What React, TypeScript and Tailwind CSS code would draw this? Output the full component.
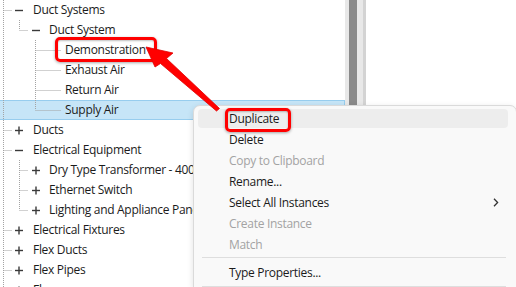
import React from "react";

type Row = {
  label: string;
  level: 0 | 1 | 2;
  expander?: "plus" | "minus";
  // vertical guides for this row: x position and whether it stops at the middle (last child)
  guides: { x: number; half?: boolean }[];
  selected?: boolean;
};

const rows: Row[] = [
  { label: "Duct Systems", level: 0, expander: "minus", guides: [{ x: 3.5 }] },
  { label: "Duct System", level: 1, expander: "minus", guides: [{ x: 3.5 }, { x: 19.5, half: true }] },
  { label: "Demonstration", level: 2, guides: [{ x: 3.5 }, { x: 35.5 }] },
  { label: "Exhaust Air", level: 2, guides: [{ x: 3.5 }, { x: 35.5 }] },
  { label: "Return Air", level: 2, guides: [{ x: 3.5 }, { x: 35.5 }] },
  { label: "Supply Air", level: 2, guides: [{ x: 3.5 }, { x: 35.5, half: true }], selected: true },
  { label: "Ducts", level: 0, expander: "plus", guides: [{ x: 3.5 }] },
  { label: "Electrical Equipment", level: 0, expander: "minus", guides: [{ x: 3.5 }] },
  { label: "Dry Type Transformer - 400V", level: 1, expander: "plus", guides: [{ x: 3.5 }, { x: 19.5 }] },
  { label: "Ethernet Switch", level: 1, expander: "plus", guides: [{ x: 3.5 }, { x: 19.5 }] },
  { label: "Lighting and Appliance Panelboard", level: 1, expander: "plus", guides: [{ x: 3.5 }, { x: 19.5, half: true }] },
  { label: "Electrical Fixtures", level: 0, expander: "plus", guides: [{ x: 3.5 }] },
  { label: "Flex Ducts", level: 0, expander: "plus", guides: [{ x: 3.5 }] },
  { label: "Flex Pipes", level: 0, expander: "plus", guides: [{ x: 3.5 }] },
  { label: "Floors", level: 0, expander: "plus", guides: [{ x: 3.5 }] },
];

const textX = { 0: 33, 1: 49, 2: 65 };
const dashFrom = { 0: 3.5, 1: 19.5, 2: 35.5 };
const dashTo = { 0: 12, 1: 28, 2: 61 };
const iconX = { 0: 15, 1: 32, 2: 0 };

function Guides({ row }: { row: Row }) {
  const w = textX[row.level];
  const ix = iconX[row.level];
  return (
    <svg width={w} height={20} className="shrink-0">
      {row.guides.map((g, i) => (
        <line
          key={i}
          x1={g.x}
          x2={g.x}
          y1={0}
          y2={g.half ? 10 : 20}
          stroke="#a3a3a3"
          strokeWidth={1}
          strokeDasharray="1 1"
        />
      ))}
      <line
        x1={dashFrom[row.level]}
        x2={dashTo[row.level]}
        y1={10.5}
        y2={10.5}
        stroke="#a3a3a3"
        strokeWidth={1}
        strokeDasharray="1 1"
      />
      {row.expander && (
        <g stroke="#3a3a3a" strokeWidth={1.4}>
          <line x1={ix} x2={ix + 8} y1={10.5} y2={10.5} />
          {row.expander === "plus" && <line x1={ix + 4} x2={ix + 4} y1={6.5} y2={14.5} />}
        </g>
      )}
    </svg>
  );
}

type MenuItem = { label: string; disabled?: boolean; hover?: boolean; submenu?: boolean } | "sep";

const menu: MenuItem[] = [
  { label: "Duplicate", hover: true },
  { label: "Delete" },
  { label: "Copy to Clipboard", disabled: true },
  { label: "Rename..." },
  { label: "Select All Instances", submenu: true },
  { label: "Create Instance", disabled: true },
  { label: "Match", disabled: true },
  "sep",
  { label: "Type Properties..." },
  "sep",
];

const font = { fontFamily: '"Open Sans", "Noto Sans", sans-serif' };

export default function App() {
  return (
    <div
      className="relative flex h-[287px] w-[516px] overflow-hidden bg-white text-[12px] tracking-[-0.3px] text-[#1b1b1b]"
      style={font}
    >
      {/* tree */}
      <div className="flex h-full w-[345px] shrink-0 flex-col overflow-hidden">
        {rows.map((row) => (
          <div
            key={row.label}
            className={
              row.selected
                ? "flex h-5 shrink-0 items-center whitespace-nowrap bg-[#c6e5f7] shadow-[inset_0_1px_0_#97cdee,inset_0_-1px_0_#97cdee,inset_-1px_0_0_#97cdee]"
                : "flex h-5 shrink-0 items-center whitespace-nowrap"
            }
          >
            <Guides row={row} />
            <span className="leading-5">{row.label}</span>
          </div>
        ))}
      </div>

      {/* scrollbar */}
      <div className="flex h-full w-[18px] shrink-0 bg-[#e8e8e8] pl-[4px]">
        <div className="h-full w-[8px] bg-[#8a8a8a]" />
      </div>
      <div className="h-full w-[3px] shrink-0 bg-[#d3d3d3]" />
      <div className="h-full flex-1 bg-white" />

      {/* context menu */}
      <div className="absolute left-[193px] top-[105px] flex w-[324px] flex-col rounded-t-[7px] border border-[#dadada] bg-[#f9f9f9] pt-[2px] shadow-[0_2px_6px_rgba(0,0,0,0.12)]">
        {menu.map((m, i) =>
          m === "sep" ? (
            <div
              key={i}
              className={
                i === 7
                  ? "mb-[4px] ml-[8px] mr-[10px] mt-[2px] h-px bg-[#dedede]"
                  : "ml-[8px] mr-[10px] mt-[3px] h-px bg-[#dedede]"
              }
            />
          ) : (
            <div
              key={i}
              className={
                "my-px ml-[4px] mr-[8px] flex h-[19px] items-center rounded-[4px] pl-[31px] pr-[9px] " +
                (m.hover ? "bg-[#ededed] " : "") +
                (m.disabled ? "text-[#a3a3a3]" : "text-[#1b1b1b]")
              }
            >
              <span>{m.label}</span>
              {m.submenu && (
                <svg width="6" height="9" viewBox="0 0 6 9" className="ml-auto">
                  <path d="M1 0.8 L4.6 4.5 L1 8.2" fill="none" stroke="#333" strokeWidth="1.3" />
                </svg>
              )}
            </div>
          )
        )}
      </div>

      {/* red highlight boxes */}
      <div className="pointer-events-none absolute left-[55px] top-[37px] h-[25px] w-[102px] rounded-[5px] border-[3px] border-[#ff0000] shadow-[0_1px_3px_rgba(0,0,0,0.35),inset_0_1px_2px_rgba(0,0,0,0.25)]" />
      <div className="pointer-events-none absolute left-[225px] top-[108px] h-[24px] w-[66px] rounded-[5px] border-[3px] border-[#ff0000] shadow-[0_1px_3px_rgba(0,0,0,0.35),inset_0_1px_2px_rgba(0,0,0,0.25)]" />

      {/* red arrow */}
      <svg className="pointer-events-none absolute left-0 top-0" width="516" height="287">
        <polygon
          points="146,47 173,53 166.5,58.5 219.5,108.5 216.5,111 160.5,63.5 155,67"
          fill="#ff0000"
          stroke="#e00000"
          strokeWidth="0.8"
          strokeLinejoin="round"
        />
      </svg>
    </div>
  );
}
